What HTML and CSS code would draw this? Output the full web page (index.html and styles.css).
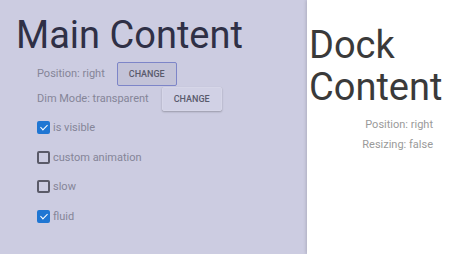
FILE: index.html
```html
<!DOCTYPE html>
<html>
<head>
<meta charset="utf-8">
<link rel="stylesheet" href="styles.css">
</head>
<body>

<div class="page">
  <div class="main">
    <h1 class="title">Main Content</h1>
    <div class="controls">
      <div class="row">
        <span class="label">Position: right</span>
        <button class="btn focused">CHANGE</button>
      </div>
      <div class="row">
        <span class="label">Dim Mode: transparent</span>
        <button class="btn">CHANGE</button>
      </div>
      <label class="check"><span class="box checked"></span>is visible</label>
      <label class="check"><span class="box"></span>custom animation</label>
      <label class="check"><span class="box"></span>slow</label>
      <label class="check"><span class="box checked"></span>fluid</label>
    </div>
  </div>

  <!-- the dock panel -->
  <div class="dock">
    <h1 class="dock-title">Dock Content</h1>
    <p class="info">Position: right</p>
    <p class="info">Resizing: false</p>
  </div>
</div>

</body>
</html>
```

FILE: styles.css
```css
* {box-sizing: border-box;}
html, body {margin: 0; padding: 0;}
body {font-family: Roboto, "Liberation Sans", sans-serif; background: #fff;}

.page {
    display: flex;
    width: 474px;
    height: 254px;
    overflow: hidden;
}

.main {
    width: 307px;
    flex: none;
    background: #cccce1;
}

.title {
    margin: 14px 0 0 16px;
    font-size: 38px;
    line-height: 42px;
    font-weight: 400;
    color: #2f3046;
}

.controls {
    margin: 5px 0 0 37px;
}

.row {
    display: flex;
    align-items: center;
    height: 25px;
}

.label {
    font-size: 11px;
    color: #858598;
}

.btn {
    font-family: Roboto, "Liberation Sans", sans-serif;
    font-size: 9px;
    font-weight: 500;
    color: #595a6c;
    height: 24px;
    padding: 0 11px;
    border: 1px solid #d6d6e8;
    border-radius: 2px;
    background: #d1d1e5;
    box-shadow: 0 1px 2px rgba(0,0,0,0.25);
    margin-left: 13px;
}

.btn.focused {
    background: #c3c3d8;
    border: 1px solid #7d85c8;
    box-shadow: none;
    margin-left: 12px;
}

.check {
    display: flex;
    align-items: center;
    height: 29.5px;
    font-size: 11px;
    color: #858598;
}

.check:first-of-type {
    margin-top: 2px;
}

.box {
    width: 13px;
    height: 13px;
    margin-right: 3px;
    border: 2px solid #5a5a68;
    border-radius: 2px;
    position: relative;
}

.box.checked {
    background: #1f76d3;
    border-color: #1f76d3;
}

.box.checked::after {
    content: "";
    position: absolute;
    left: 3px;
    top: 0px;
    width: 3px;
    height: 6px;
    border: solid #fff;
    border-width: 0 1.5px 1.5px 0;
    transform: rotate(45deg);
}

.dock {
    flex: 1;
    min-width: 0;
    background: #fff;
    box-shadow: -1px 0 3px rgba(0,0,0,0.15);
    padding: 24px 41px 0 2px;
}

.dock-title {
    margin: 0;
    font-size: 38px;
    line-height: 42px;
    font-weight: 400;
    color: #3a3a3a;
}

.info {
    margin: 0;
    text-align: right;
    font-size: 11px;
    line-height: 20px;
    color: #9a9a9a;
}

.info:first-of-type {
    margin-top: 7px;
}
```
